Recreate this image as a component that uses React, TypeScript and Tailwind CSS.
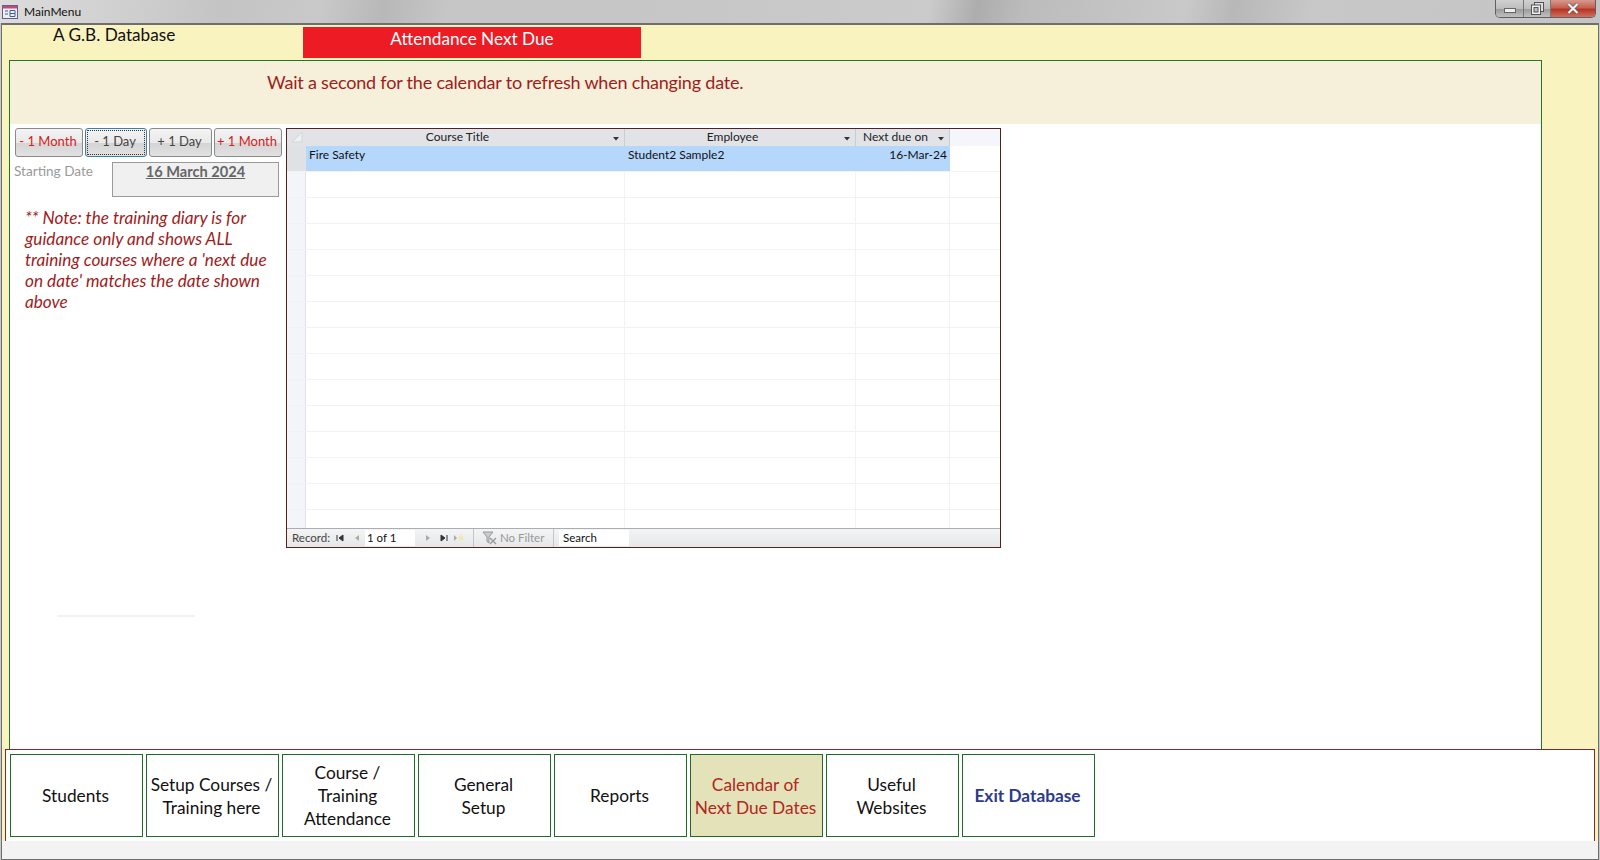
const F = "font-['Lato','Open_Sans',sans-serif]";

function NavBtn({ label, red, active, w }: { label: string; red?: boolean; active?: boolean; w: string }) {
  return (
    <button
      className={`${w} h-[29px] pb-[2px] pr-[2px] whitespace-nowrap rounded-[3px] border text-[13px] leading-none bg-[linear-gradient(#f4f4f4,#e9e9e9_50%,#d4d4d4_52%,#e2e2e2)] ${
        active ? "border-[#3c7fb1] outline-1 outline-dotted outline-offset-[-3px] outline-[#333]" : "border-[#8a8a8a]"
      } ${red ? "text-[#d42020]" : "text-[#444]"}`}
    >
      {label}
    </button>
  );
}

function Menu({ children, active, exit }: { children: React.ReactNode; active?: boolean; exit?: boolean }) {
  return (
    <div
      className={`w-[133px] h-full flex items-center justify-center text-center pr-[2px] border border-[#1f6b2a] text-[17.3px] leading-[23px] ${
        active ? "bg-[#e3e2b8] text-[#b0281f]" : exit ? "bg-white font-bold text-[#2b3a8c]" : "bg-white text-[#111]"
      }`}
    >
      <div className="whitespace-nowrap">{children}</div>
    </div>
  );
}

function Arrow() {
  return (
    <svg width="6" height="4" viewBox="0 0 6 4" className="absolute right-[5px] top-[8px]">
      <path d="M0 0h6L3 3.5z" fill="#333" />
    </svg>
  );
}

function HeaderCell({ label, w, last }: { label: string; w: string; last?: boolean }) {
  return (
    <div className={`${w} relative h-full flex items-center pb-[2px] border-r border-[#c9ccd2] text-[12px] text-[#222] ${last ? "justify-start pl-[7px]" : "justify-center pr-[15px]"}`}>
      {label}
      <Arrow />
    </div>
  );
}

function Row({ selected, cells }: { selected?: boolean; cells?: [string, string, string] }) {
  const c = selected ? "bg-[#b5d7fb] border-[#b5d7fb]" : "border-[#f3f3f3]";
  return (
    <div className="flex h-[26px] shrink-0 border-b border-[#f1f2f4] text-[12px] text-[#111]">
      <div className={`w-[19px] shrink-0 border-r border-[#dfe2ea] ${selected ? "bg-[#dfe1e5]" : "bg-[#f4f5fb]"}`} />
      <div className={`w-[319px] border-r ${c} pl-[3px]`}>{cells?.[0]}</div>
      <div className={`w-[231px] border-r ${c} pl-[3px]`}>{cells?.[1]}</div>
      <div className={`w-[94px] border-r ${c} pr-[2px] text-right`}>{cells?.[2]}</div>
    </div>
  );
}

export default function App() {
  return (
    <div className={`${F} w-[1600px] h-[860px] flex flex-col overflow-hidden bg-[#c9c9c9]`}>
      <div className="relative h-[23px] shrink-0 flex items-center bg-[linear-gradient(100deg,#dcdcdc_0%,#cfcfcf_8%,#c4c4c4_14%,#c9c9c9_20%,#b8b8b8_24%,#c6c6c6_28%,#c6c6c6_40%,#cbcbcb_58%,#adadad_61%,#bcbcbc_64%,#c9c9c9_74%,#b8b8b8_77%,#c8c8c8_82%,#c4c4c4_100%)]">
        <svg width="16" height="16" viewBox="0 0 16 16" className="ml-[2px] mr-[6px]">
          <rect x="0.5" y="1.5" width="15" height="13" fill="#eef0f6" stroke="#6b5a8c" />
          <rect x="1" y="2" width="14" height="2.5" fill="#c04a7a" />
          <path d="M3 7h3M3 10h3M8 6.5h5v6H8zM8 9.5h5" stroke="#3f5f95" fill="none" />
        </svg>
        <span className="text-[12px] pt-[1px] text-[#111]">MainMenu</span>
        <div className="ml-auto mr-[4px] mb-[5px] flex h-[18px] w-[101px] rounded-b-[5px] border border-t-0 border-[#5f5f5f] overflow-hidden">
          <div className="w-[28px] border-r border-[#777] bg-[linear-gradient(#d0d0d0,#bdbdbd_50%,#9c9c9c_55%,#c0c0c0)] flex items-center justify-center">
            <div className="w-[12px] h-[5px] mt-[3px] bg-[#eee] border border-[#666]" />
          </div>
          <div className="w-[27px] border-r border-[#777] bg-[linear-gradient(#d0d0d0,#bdbdbd_50%,#9c9c9c_55%,#c0c0c0)] flex items-center justify-center">
            <svg width="13" height="13" viewBox="0 0 13 13">
              <rect x="3.5" y="0.5" width="9" height="9" fill="#ddd" stroke="#555" />
              <rect x="0.5" y="3" width="9" height="9.5" fill="#eee" stroke="#555" />
              <rect x="3" y="5.5" width="4" height="4.5" fill="#bbb" stroke="#555" />
            </svg>
          </div>
          <div className="flex-1 bg-[linear-gradient(#d59a90,#c9604e_45%,#b53524_55%,#d0705f)] flex items-center justify-center">
            <svg width="12" height="11" viewBox="0 0 12 11">
              <path d="M1.5 1l9 9M10.5 1l-9 9" stroke="#555" strokeWidth="3.4" />
              <path d="M1.5 1l9 9M10.5 1l-9 9" stroke="#f3f3f3" strokeWidth="2.2" />
            </svg>
          </div>
        </div>
      </div>

      <div className="flex-1 min-h-0 ml-[1px] mr-[1px] border border-t-2 border-[#6e6e6e] bg-[#f9f3c0] flex flex-col">
        <div className="h-[35px] shrink-0 flex">
          <div className="w-[301px] pl-[51px] text-[17.2px] leading-[20px] text-[#111]">A G.B. Database</div>
          <div className="w-[338px] mt-[2px] h-[31px] pb-[7px] bg-[#ed1c24] text-white text-[17.2px] flex items-center justify-center">Attendance Next Due</div>
        </div>
        <div className="flex-1 min-h-0 ml-[7px] mr-[56px] border-x border-t border-[#1f7a1f] flex flex-col bg-white">
          <div className="h-[63px] shrink-0 bg-[#f6efd9] pl-[257px] pt-[10px] text-[18px] tracking-[-0.2px] leading-[23px] text-[#a01c1c]">
            Wait a second for the calendar to refresh when changing date.
          </div>
          <div className="flex-1 flex pl-[5px] pt-[4px]">
            <div className="w-[271px] shrink-0">
              <div className="flex gap-[2px]">
                <NavBtn w="w-[68px]" label="- 1 Month" red />
                <NavBtn w="w-[62px]" label="- 1 Day" active />
                <NavBtn w="w-[63px]" label="+ 1 Day" />
                <NavBtn w="w-[68px]" label="+ 1 Month" red />
              </div>
              <div className="flex mt-[5px]">
                <div className="w-[98px] text-[13.6px] leading-[18px] text-[#9a9a9a] -ml-[1px]">Starting Date</div>
                <div className="w-[167px] h-[35px] bg-[#f0f0f0] border border-[#9a9a9a] text-center text-[14.6px] font-bold underline leading-[18px] text-[#666]">16 March 2024</div>
              </div>
              <div className="mt-[10px] pl-[10px] w-[265px] text-[17.2px] italic leading-[21px] text-[#a01c1c]">
                ** Note: the training diary is for guidance only and shows ALL training courses where a 'next due on date' matches the date shown above
              </div>
              <div className="mt-[303px] ml-[42px] w-[138px] h-[2px] bg-[#f2f2f2]" />
            </div>
            <div className="w-[715px] h-[420px] border border-[#4f2320] flex flex-col">
              <div className="h-[17px] shrink-0 flex">
                <div className="w-[19px] bg-[#e1e3e7] relative">
                  <svg width="12" height="12" viewBox="0 0 12 12" className="absolute left-[4px] top-[2px]"><path d="M11 1L1 11h10z" fill="#eef0f3" stroke="#d2d5da" /></svg>
                </div>
                <div className="flex h-full bg-[#e1e3e7]">
                  <HeaderCell w="w-[319px]" label="Course Title" />
                  <HeaderCell w="w-[231px]" label="Employee" />
                  <HeaderCell w="w-[94px]" label="Next due on" last />
                </div>
                <div className="flex-1 bg-[#f5f6fb]" />
              </div>
              <div className="flex-1 min-h-0 overflow-hidden relative bg-white">
                <Row selected cells={["Fire Safety", "Student2 Sample2", "16-Mar-24"]} />
                {Array.from({ length: 14 }).map((_, i) => <Row key={i} />)}
              </div>
              <div className="h-[19px] shrink-0 border-t border-[#a9aeb5] bg-[linear-gradient(#f4f4f4,#e6e7e9)] flex items-center text-[11.5px] text-[#444]">
                <span className="ml-[5px] w-[44px]">Record:</span>
                <svg width="8" height="8" viewBox="0 0 8 8"><path d="M1 1v6M7 1L3 4l4 3z" stroke="#333" fill="#333" /></svg>
                <svg width="6" height="8" viewBox="0 0 6 8" className="ml-[10px]"><path d="M5 1L1 4l4 3z" fill="#aaa" /></svg>
                <span className="ml-[5px] w-[50px] h-[16px] bg-white text-[#111] pl-[2px] leading-[16px]">1 of 1</span>
                <svg width="6" height="8" viewBox="0 0 6 8" className="ml-[10px]"><path d="M1 1l4 3-4 3z" fill="#aaa" /></svg>
                <svg width="8" height="8" viewBox="0 0 8 8" className="ml-[9px]"><path d="M7 1v6M1 1l4 3-4 3z" stroke="#333" fill="#333" /></svg>
                <svg width="12" height="8" viewBox="0 0 12 8" className="ml-[5px]"><path d="M1 1l3 3-3 3z" fill="#aaa" /><path d="M8 0v8M5 4h6M6 2l4 4M10 2L6 6" stroke="#efe6a8" /></svg>
                <div className="ml-[8px] w-[81px] h-full border-x border-[#c4c6ca] flex items-center text-[#999]">
                  <svg width="15" height="14" viewBox="0 0 15 14" className="ml-[8px] mr-[3px]"><path d="M1 1h10L7 6v6L5 10.5V6z" fill="#ccc" stroke="#999" /><path d="M8 7l6 6M14 7l-6 6" stroke="#999" strokeWidth="1.4" /></svg>
                  No Filter
                </div>
                <span className="ml-[5px] w-[70px] h-[16px] bg-white text-[#111] pl-[4px] leading-[16px]">Search</span>
              </div>
            </div>
          </div>
        </div>
        <div className="h-[92px] shrink-0 ml-[3px] mr-[3px] border-x border-t border-[#7c2a2a] bg-white flex gap-[3px] pl-[4px] pt-[4px] pb-[4px]">
          <Menu>Students</Menu>
          <Menu>Setup Courses /<br />Training here</Menu>
          <Menu>Course /<br />Training<br />Attendance</Menu>
          <Menu>General<br />Setup</Menu>
          <Menu>Reports</Menu>
          <Menu active>Calendar of<br />Next Due Dates</Menu>
          <Menu>Useful<br />Websites</Menu>
          <Menu exit>Exit Database</Menu>
        </div>
        <div className="h-[18px] shrink-0 bg-[#f3f3f3]" />
      </div>
    </div>
  );
}
